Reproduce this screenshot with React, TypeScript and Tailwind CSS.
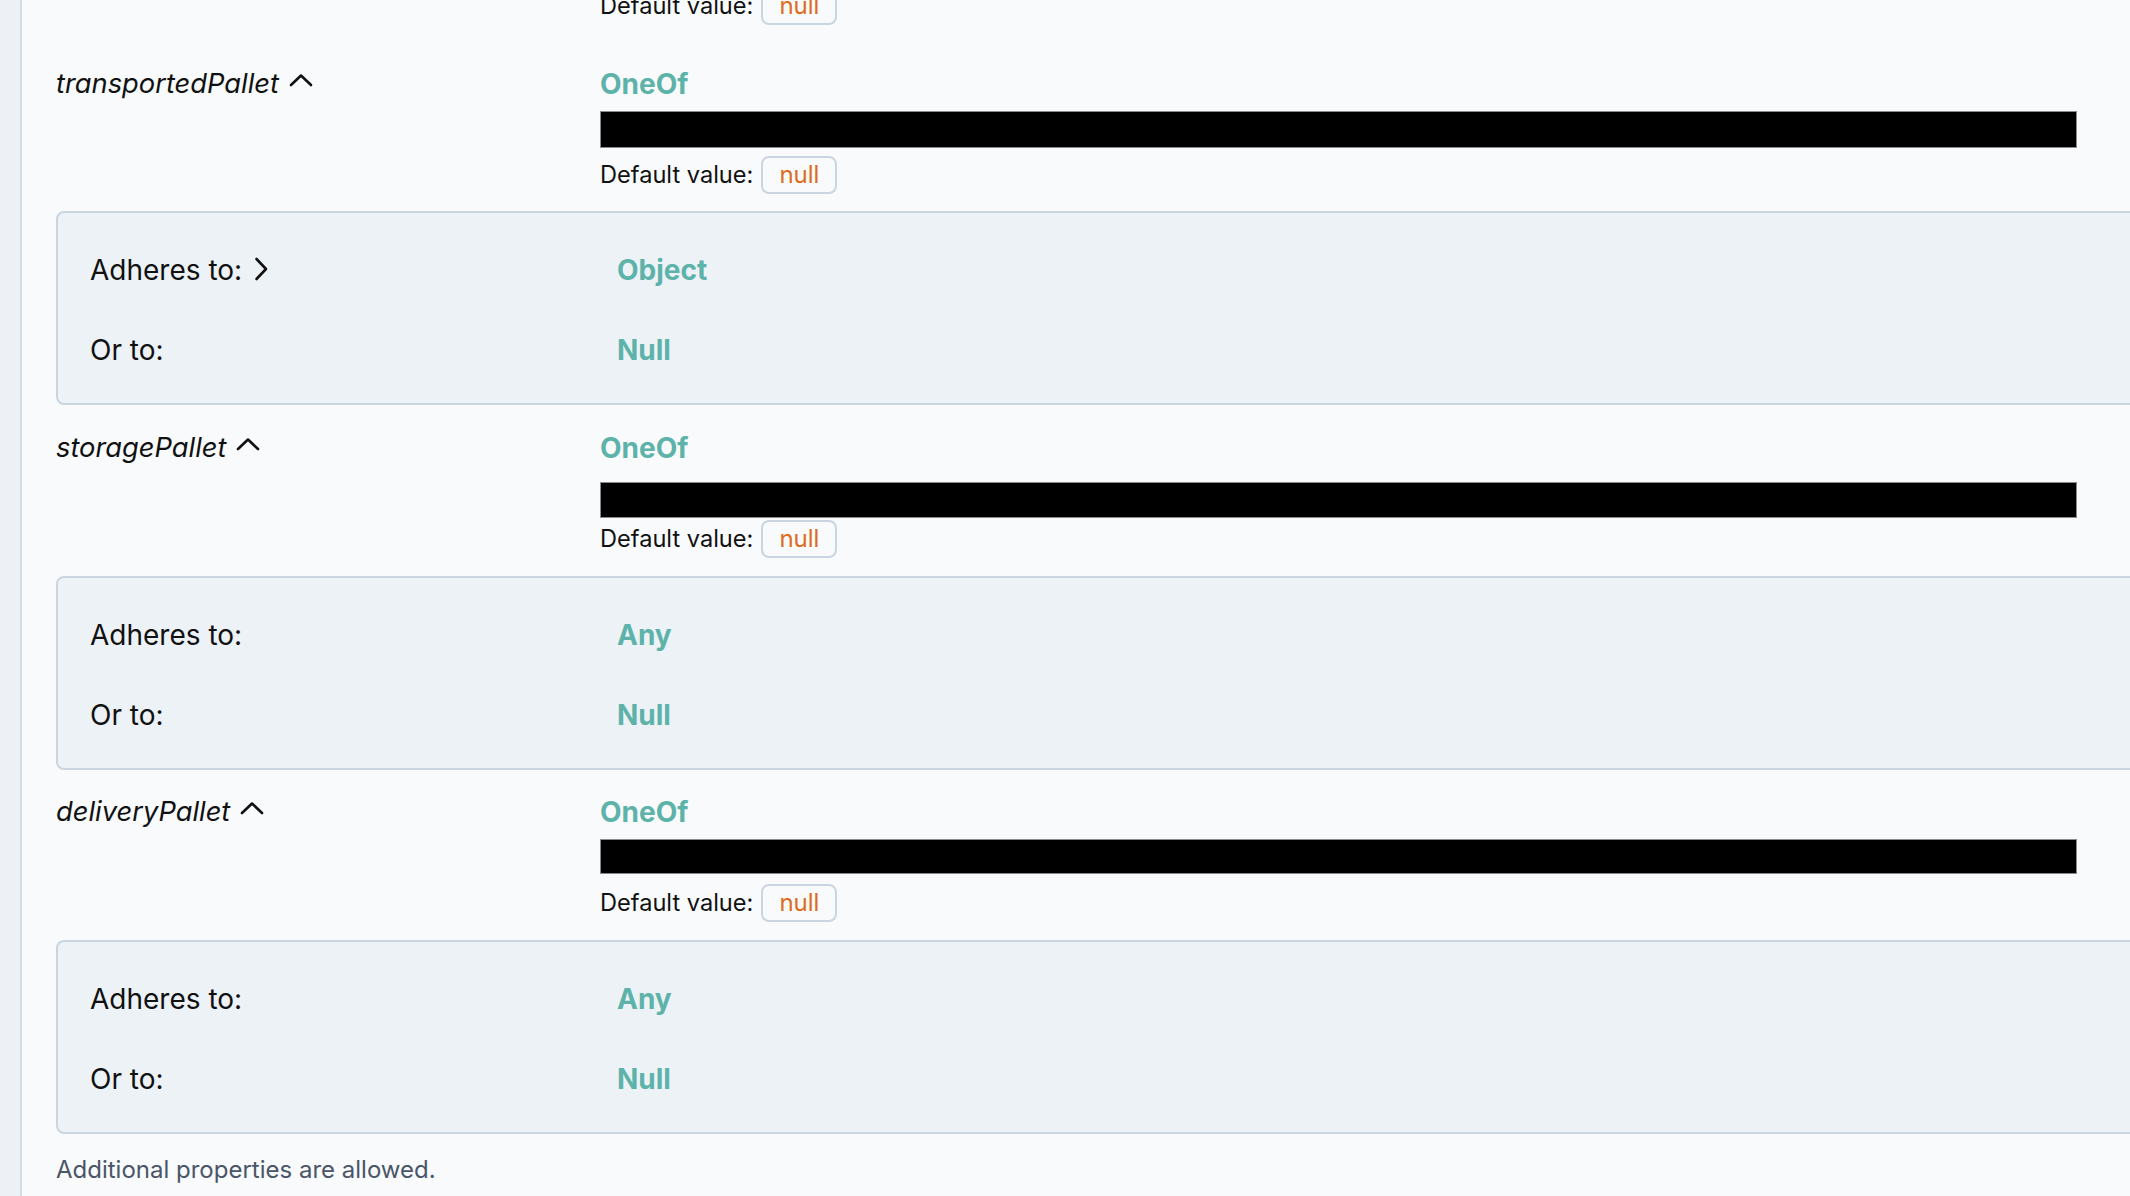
import React from "react";

const font = { fontFamily: "Inter, 'Noto Sans', sans-serif" };

function ChevronUp() {
  return (
    <svg width="24" height="14" viewBox="0 0 24 14" className="ml-[10px] -mt-[8px] shrink-0">
      <polyline points="2,12 12,2.5 22,12" fill="none" stroke="#111" strokeWidth="2.6" strokeLinecap="round" strokeLinejoin="round" />
    </svg>
  );
}

function ChevronRight() {
  return (
    <svg width="14" height="24" viewBox="0 0 14 24" className="ml-[12px] -mt-[2px] shrink-0">
      <polyline points="2.5,2 12,12 2.5,22" fill="none" stroke="#111" strokeWidth="2.6" strokeLinecap="round" strokeLinejoin="round" />
    </svg>
  );
}

function DefaultRow({ className = "" }: { className?: string }) {
  return (
    <div className={"flex items-center h-[38px] " + className}>
      <span className="text-[23.6px] text-[#111] leading-[38px]">Default value:</span>
      <span className="ml-[8px] w-[76px] h-[38px] border-2 border-[#cbd5e0] rounded-[8px] flex items-center justify-center text-[24px] text-[#dd6b20]">
        null
      </span>
    </div>
  );
}

function Box({ first, second, chevron, className = "" }: { first: string; second: string; chevron?: boolean; className?: string }) {
  return (
    <div className={"h-[194px] border-2 border-[#cbd5e0] rounded-[8px] bg-[#edf2f7] pl-[32px] pt-[37px] " + className}>
      <div className="flex h-[40px] items-center">
        <div className="w-[527px] flex items-center text-[28px] text-[#111]">
          <span>Adheres to:</span>
          {chevron && <ChevronRight />}
        </div>
        <div className="text-[28px] font-bold text-[#5db3a9]">{first}</div>
      </div>
      <div className="flex h-[40px] items-center mt-[40px]">
        <div className="w-[527px] text-[28px] text-[#111]">Or to:</div>
        <div className="text-[28px] font-bold text-[#5db3a9]">{second}</div>
      </div>
    </div>
  );
}

function Prop({
  name,
  className = "",
  barMt,
  barH,
  pillMt,
}: {
  name: string;
  className?: string;
  barMt: string;
  barH: string;
  pillMt: string;
}) {
  return (
    <div className={"flex " + className}>
      <div className="w-[544px] h-[40px] flex items-center">
        <span className="text-[27.3px] italic text-[#111]">{name}</span>
        <ChevronUp />
      </div>
      <div className="flex flex-col">
        <div className="h-[40px] flex items-center text-[28px] font-bold text-[#5db3a9]">OneOf</div>
        <div className={"w-[1477px] bg-black border border-[#8a8a8a] " + barMt + " " + barH} />
        <DefaultRow className={pillMt} />
      </div>
    </div>
  );
}

export default function App() {
  return (
    <div className="w-[2130px] h-[1196px] overflow-hidden bg-[#f8fafc] flex" style={font}>
      <div className="w-[22px] h-full bg-[#edf1f6] border-r-2 border-[#d3dae3] shrink-0" />
      <div className="pl-[34px] w-[2210px] shrink-0 flex flex-col">
        <div className="flex -mt-[13px]">
          <div className="w-[544px]" />
          <DefaultRow />
        </div>

        <Prop name="transportedPallet" className="mt-[39px]" barMt="mt-[7px]" barH="h-[37px]" pillMt="mt-[8px]" />
        <Box first="Object" second="Null" chevron className="mt-[17px]" />

        <Prop name="storagePallet" className="mt-[23px]" barMt="mt-[14px]" barH="h-[36px]" pillMt="mt-[2px]" />
        <Box first="Any" second="Null" className="mt-[18px]" />

        <Prop name="deliveryPallet" className="mt-[22px]" barMt="mt-[7px]" barH="h-[35px]" pillMt="mt-[10px]" />
        <Box first="Any" second="Null" className="mt-[18px]" />

        <div className="mt-[18px] h-[36px] leading-[36px] text-[24px] text-[#4a5568]">Additional properties are allowed.</div>
      </div>
    </div>
  );
}
